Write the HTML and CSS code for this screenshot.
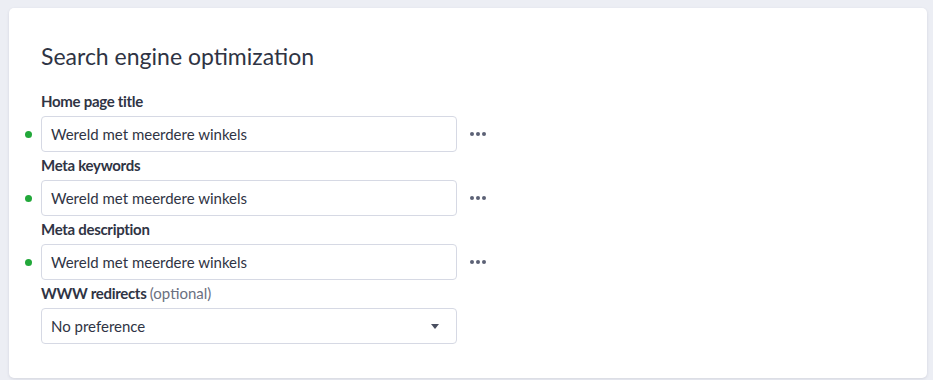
FILE: index.html
```html
<!DOCTYPE html>
<html lang="en">
<head>
    <meta charset="UTF-8">
    <title>SEO</title>
    <link rel="stylesheet" href="styles.css">
</head>
<body>
    <div class="card">
        <h2 class="card-title">Search engine optimization</h2>

        <div class="field">
            <label class="field-label">Home page title</label>
            <div class="field-row">
                <span class="status-dot"></span>
                <div class="input">Wereld met meerdere winkels</div>
                <span class="more"><i></i><i></i><i></i></span>
            </div>
        </div>

        <div class="field">
            <label class="field-label">Meta keywords</label>
            <div class="field-row">
                <span class="status-dot"></span>
                <div class="input">Wereld met meerdere winkels</div>
                <span class="more"><i></i><i></i><i></i></span>
            </div>
        </div>

        <div class="field">
            <label class="field-label">Meta description</label>
            <div class="field-row">
                <span class="status-dot"></span>
                <div class="input">Wereld met meerdere winkels</div>
                <span class="more"><i></i><i></i><i></i></span>
            </div>
        </div>

        <div class="field">
            <label class="field-label">WWW redirects <span class="optional">(optional)</span></label>
            <div class="field-row">
                <div class="input select">
                    <span>No preference</span>
                    <span class="caret"></span>
                </div>
            </div>
        </div>
    </div>
</body>
</html>
```

FILE: styles.css
```css
body,html{
    margin: 0;
    padding: 0;
    background-color: #eceef4;
}
body{
    padding: 8px 6px 4px 9px;
    font-family: Lato, "Open Sans", sans-serif;
    color: #2f3444;
}
.card{
    background-color: #fff;
    border-radius: 5px;
    box-shadow: 0 1px 3px rgba(40,45,70,.12);
    padding: 33px 32px 31px 32px;
}
.card-title{
    margin: 0 0 20px 0;
    font-size: 23px;
    line-height: 30px;
    font-weight: 400;
}
.field{
    margin-bottom: 3px;
}
.field-label{
    display: block;
    font-size: 15px;
    line-height: 20px;
    font-weight: 700;
    letter-spacing: -0.3px;
    margin-bottom: 5px;
}
.optional{
    font-weight: 400;
    letter-spacing: 0;
    color: #6b7080;
}
.field-row{
    display: flex;
    align-items: center;
}
.status-dot{
    width: 7px;
    height: 7px;
    border-radius: 50%;
    background-color: #22a83a;
    margin-left: -16px;
    margin-right: 9px;
}
.input{
    box-sizing: border-box;
    width: 416px;
    height: 36px;
    border: 1px solid #d6d9e4;
    border-radius: 4px;
    padding: 0 9px;
    font-size: 15px;
    line-height: 34px;
}
.select{
    display: flex;
    justify-content: space-between;
    align-items: center;
    padding-right: 17px;
}
.caret{
    width: 0;
    height: 0;
    border-left: 4px solid transparent;
    border-right: 4px solid transparent;
    border-top: 5px solid #4a4f60;
}
.more{
    display: flex;
    gap: 2px;
    margin-left: 13px;
}
.more i{
    width: 4px;
    height: 4px;
    border-radius: 50%;
    background-color: #5c6175;
}
```
